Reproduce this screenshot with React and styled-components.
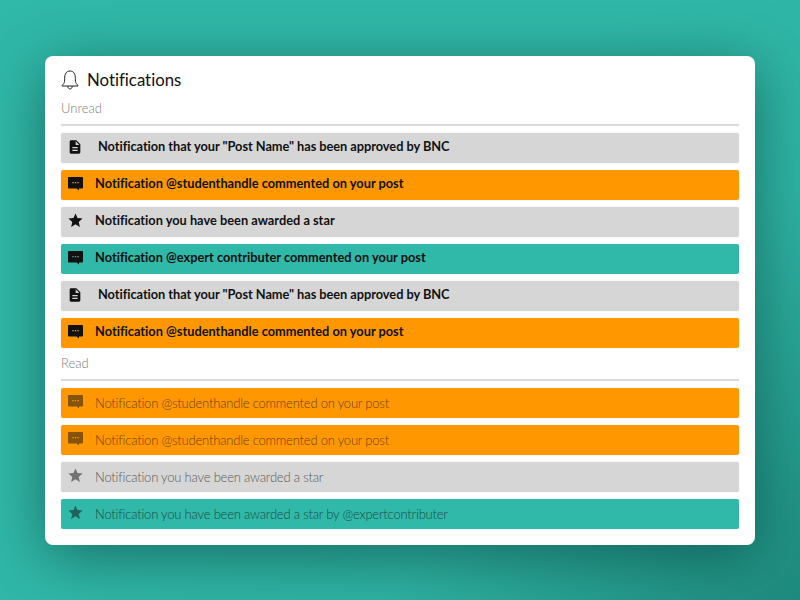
import React from "react";
import styled, { createGlobalStyle } from "styled-components";
import { MdDescription, MdStar } from "react-icons/md";

const Global = createGlobalStyle`
  html, body { margin: 0; padding: 0; height: 100%; }
  body {
    font-family: Lato, "Liberation Sans", sans-serif;
    font-variant-ligatures: none;
  }
`;

const Page = styled.div`
  width: 800px;
  height: 600px;
  overflow: hidden;
  box-sizing: border-box;
  padding: 56px 45px;
  background: linear-gradient(135deg, #30b8a8 0%, #30b8a8 45%, #2eb3a3 70%, #1e8b7f 100%);
`;

const Card = styled.div`
  height: 489px;
  box-sizing: border-box;
  padding: 10px 16px 16px;
  background: #fff;
  border-radius: 8px;
  box-shadow: 0 12px 60px rgba(0, 40, 36, 0.5);
`;

const Header = styled.div`
  display: flex;
  align-items: center;
  gap: 8px;
  height: 27px;
  color: #222;
  svg { display: block; flex: none; }
`;

const Title = styled.h1`
  margin: 0;
  font-size: 16.8px;
  font-weight: 400;
  line-height: 27px;
  color: #111;
`;

const SectionLabel = styled.div`
  margin-top: 7px;
  font-size: 13px;
  font-weight: 300;
  line-height: 16px;
  color: #808080;
`;

const Divider = styled.div`
  height: 2px;
  margin: 8px 0 7px;
  background: #dcdcdc;
`;

const List = styled.div`
  display: flex;
  flex-direction: column;
  gap: 7px;
`;

const COLORS = { grey: "#d6d6d6", orange: "#ff9800", teal: "#30b8a8" };

const Row = styled.div`
  display: flex;
  align-items: center;
  box-sizing: border-box;
  height: 30px;
  padding: 0 0 3px 5px;
  border-radius: 2px;
  background: ${(p) => COLORS[p.$tone]};
  color: #111;
  box-shadow: 0 0 2px rgba(0, 0, 0, 0.1);
`;

const IconSlot = styled.span`
  display: flex;
  align-items: center;
  justify-content: center;
  width: 18px;
  opacity: ${(p) => (p.$read ? 0.5 : 1)};
  svg { display: block; flex: none; }
`;

const Message = styled.span`
  margin: ${(p) => (p.$read ? "2px 0 0" : "0 0 2px")};
  margin-left: ${(p) => (p.$wide ? 14 : 11)}px;
  font-size: ${(p) => (p.$read ? 13 : 12.8)}px;
  line-height: 16px;
  letter-spacing: ${(p) => (p.$read ? -0.2 : p.$wide ? -0.05 : 0)}px;
  font-weight: ${(p) => (p.$read ? 300 : 700)};
  opacity: ${(p) => (p.$read ? 0.66 : 1)};
`;

function BellIcon() {
  return (
    <svg width="18" height="20" viewBox="0 0 18 20" fill="none" stroke="currentColor" strokeWidth="1">
      <path d="M1 16H17C17 15 16 14.6 15.3 13.6C14.4 12.3 14.4 10.5 14.4 8.5C14.4 4 12.6 1 9 1C5.4 1 3.6 4 3.6 8.5C3.6 10.5 3.6 12.3 2.7 13.6C2 14.6 1 15 1 16Z" />
      <path d="M6.8 16.2C6.9 18 7.8 19 9 19C10.2 19 11.1 18 11.2 16.2" />
    </svg>
  );
}

function ChatIcon({ dot }) {
  return (
    <svg width="15" height="14" viewBox="0 0 15 14">
      <path d="M0 1C0 .5 .5 0 1 0H14C14.5 0 15 .5 15 1V10.5C15 11 14.5 11.5 14 11.5H11V13.6L8.6 11.5H1C.5 11.5 0 11 0 10.5Z" fill="currentColor" />
      <rect x="4.4" y="5" width="1.3" height="1.3" fill={dot} />
      <rect x="6.9" y="5" width="1.3" height="1.3" fill={dot} />
      <rect x="9.4" y="5" width="1.3" height="1.3" fill={dot} />
    </svg>
  );
}

function Glyph({ icon, tone }) {
  if (icon === "doc") return <MdDescription size={16} />;
  if (icon === "star") return <MdStar size={17} />;
  return <ChatIcon dot={COLORS[tone]} />;
}

const unread = [
  ["grey", "doc", 'Notification that your "Post Name" has been approved by BNC'],
  ["orange", "chat", "Notification @studenthandle commented on your post"],
  ["grey", "star", "Notification you have been awarded a star"],
  ["teal", "chat", "Notification @expert contributer commented on your post"],
  ["grey", "doc", 'Notification that your "Post Name" has been approved by BNC'],
  ["orange", "chat", "Notification @studenthandle commented on your post"],
];

const read = [
  ["orange", "chat", "Notification @studenthandle commented on your post"],
  ["orange", "chat", "Notification @studenthandle commented on your post"],
  ["grey", "star", "Notification you have been awarded a star"],
  ["teal", "star", "Notification you have been awarded a star by @expertcontributer"],
];

function Item({ tone, icon, text, isRead }) {
  return (
    <Row $tone={tone}>
      <IconSlot $read={isRead}>
        <Glyph icon={icon} tone={tone} />
      </IconSlot>
      <Message $read={isRead} $wide={icon === "doc"}>
        {text}
      </Message>
    </Row>
  );
}

export default function App() {
  return (
    <Page>
      <Global />
      <Card>
        <Header>
          <BellIcon />
          <Title>Notifications</Title>
        </Header>
        <SectionLabel>Unread</SectionLabel>
        <Divider />
        <List>
          {unread.map(([tone, icon, text], i) => (
            <Item key={i} tone={tone} icon={icon} text={text} />
          ))}
        </List>
        <SectionLabel>Read</SectionLabel>
        <Divider />
        <List>
          {read.map(([tone, icon, text], i) => (
            <Item key={i} tone={tone} icon={icon} text={text} isRead />
          ))}
        </List>
      </Card>
    </Page>
  );
}
